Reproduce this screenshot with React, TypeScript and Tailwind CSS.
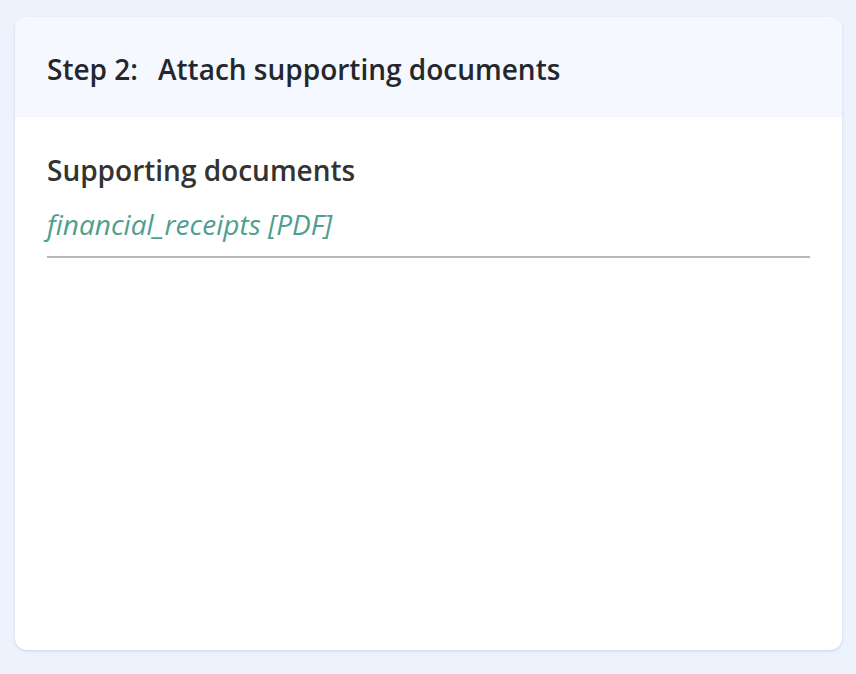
export default function App() {
  return (
    <div
      className="min-h-screen bg-[#edf3fd] pl-[15px] pr-[14px] pt-[17px] pb-6"
      style={{ fontFamily: '"Open Sans", "Noto Sans", sans-serif' }}
    >
      <div className="h-[633px] overflow-hidden rounded-[12px] bg-white shadow-[0_1px_3px_rgba(40,60,100,0.18)]">
        {/* header */}
        <div className="flex h-[100px] items-center bg-[#f5f9ff] px-8">
          <h2 className="pt-[4px] text-[28px] font-semibold leading-[38px] text-[#24272c]">
            <span>Step 2:</span>
            <span className="ml-[20px]">Attach supporting documents</span>
          </h2>
        </div>

        {/* body */}
        <div className="px-8 pt-[34px]">
          <h3 className="text-[28px] font-semibold leading-[38px] text-[#333333]">
            Supporting documents
          </h3>
          <p className="mt-[16px] text-[28px] italic leading-[38px] text-[#4f9e90]">
            financial_receipts [PDF]
          </p>
          <div className="mt-[13px] h-[2px] bg-[#b8b8b8]" />
        </div>
      </div>
    </div>
  );
}
